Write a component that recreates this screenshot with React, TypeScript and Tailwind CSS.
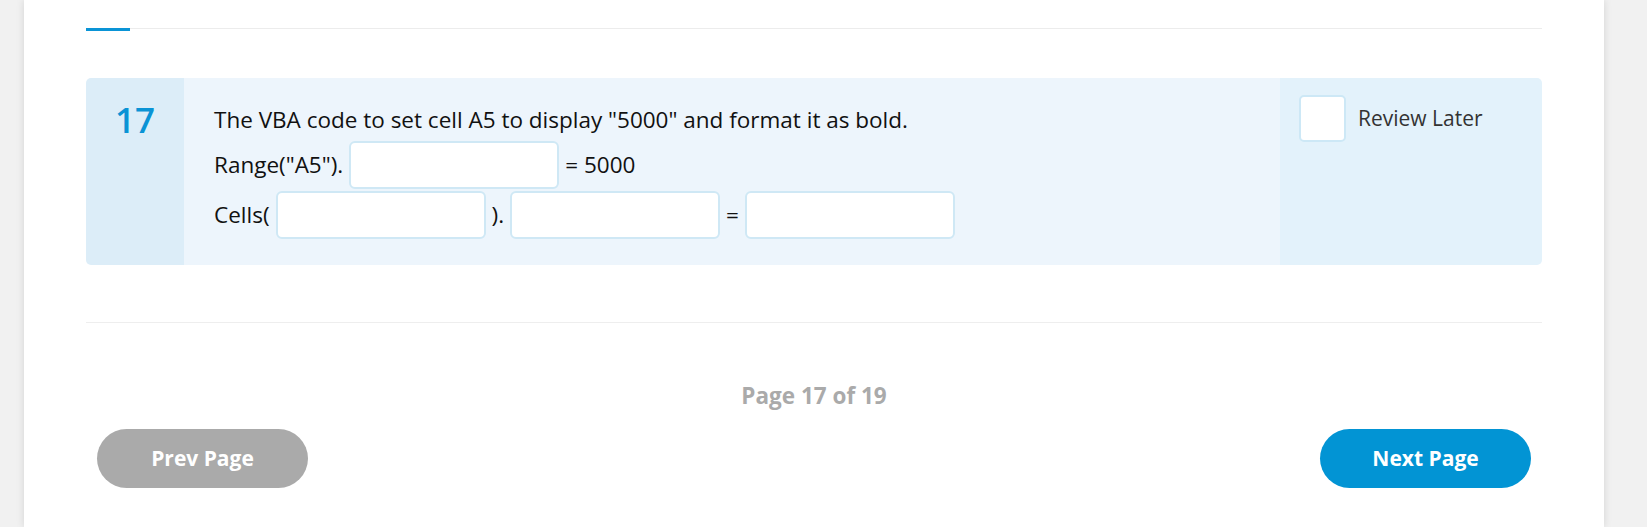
import React from "react";

function Field() {
  return (
    <span className="inline-block w-[210px] h-[48px] shrink-0 rounded-[6px] border-2 border-[#cfe8f5] bg-white" />
  );
}

export default function App() {
  return (
    <div
      className="w-[1647px] h-[527px] overflow-hidden bg-[#f1f1f1] flex"
      style={{ fontFamily: '"Open Sans", "Noto Sans", sans-serif' }}
    >
      <div className="ml-[24px] w-[1580px] h-full bg-white shadow-[0_0_8px_rgba(0,0,0,0.12)] px-[62px] flex flex-col">
        {/* tab underline */}
        <div className="mt-[28px] flex items-start">
          <div className="w-[44px] h-[3px] bg-[#0a94d6]" />
          <div className="flex-1 h-px bg-[#ececec]" />
        </div>

        {/* question card */}
        <div className="mt-[47px] flex h-[187px] rounded-[5px] overflow-hidden">
          <div className="w-[98px] bg-[#dcedf8] pt-[24px] text-center">
            <span className="text-[35px] leading-[35px] font-semibold text-[#0a93d5]">17</span>
          </div>
          <div className="flex-1 bg-[#edf5fc] pl-[30px] pt-[25px] text-[22.5px] text-[#111]">
            <p className="leading-[34px]">
              The VBA code to set cell A5 to display "5000" and format it as bold.
            </p>
            <div className="mt-[4px] h-[48px] flex items-center gap-[6px] leading-[34px]">
              <span>Range("A5").</span>
              <Field />
              <span>= 5000</span>
            </div>
            <div className="mt-[2px] h-[48px] flex items-center gap-[6px] leading-[34px]">
              <span>Cells(</span>
              <Field />
              <span>).</span>
              <Field />
              <span>=</span>
              <Field />
            </div>
          </div>
          <div className="w-[262px] bg-[#e3f2fb] pl-[19px] pt-[17px]">
            <label className="flex items-center gap-[12px]">
              <span className="inline-block w-[47px] h-[47px] rounded-[5px] border-2 border-[#cde8f6] bg-white" />
              <span className="text-[21px] leading-[31px] text-[#333]">Review Later</span>
            </label>
          </div>
        </div>

        {/* divider */}
        <div className="mt-[57px] h-px bg-[#eeeeee]" />

        {/* pagination */}
        <div className="mt-[56px] text-center text-[22.5px] leading-[34px] font-bold text-[#aaaaaa]">
          Page 17 of 19
        </div>
        <div className="mt-[16px] px-[11px] flex justify-between">
          <button className="w-[211px] h-[59px] rounded-full bg-[#aaaaaa] text-white text-[21px] font-bold">
            Prev Page
          </button>
          <button className="w-[211px] h-[59px] rounded-full bg-[#0294d4] text-white text-[21px] font-bold">
            Next Page
          </button>
        </div>
      </div>
    </div>
  );
}
